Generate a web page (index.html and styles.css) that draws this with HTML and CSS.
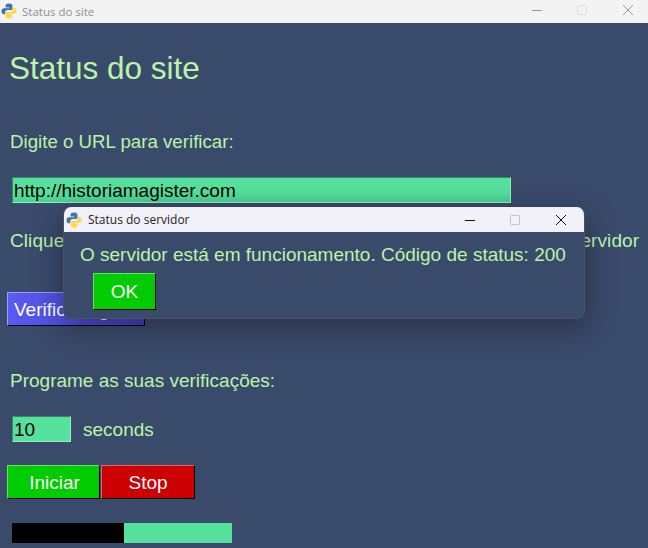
FILE: index.html
```html
<!DOCTYPE html>
<html lang="en">
<head>
<meta charset="UTF-8">
<title>Status do site</title>
<link rel="stylesheet" href="styles.css">
</head>
<body>
<svg class="defs" width="0" height="0">
  <symbol id="python" viewBox="0 0 16 16">
    <path fill="#3b77a8" d="M8 0.5C5.6 0.5 4.6 1.4 4.6 2.8V4.5H8.2V5.2H3C1.4 5.2 0.5 6.4 0.5 8.2C0.5 10 1.4 11.2 2.8 11.2H4.2V9.4C4.2 8 5.2 7.1 6.6 7.1H9.8C10.8 7.1 11.4 6.4 11.4 5.5V2.8C11.4 1.4 10.2 0.5 8 0.5Z"/>
    <path fill="#ffd84a" d="M8 15.5C10.4 15.5 11.4 14.6 11.4 13.2V11.5H7.8V10.8H13C14.6 10.8 15.5 9.6 15.5 7.8C15.5 6 14.6 4.8 13.2 4.8H11.8V6.6C11.8 8 10.8 8.9 9.4 8.9H6.2C5.2 8.9 4.6 9.6 4.6 10.5V13.2C4.6 14.6 5.8 15.5 8 15.5Z"/>
  </symbol>
</svg>

<div class="window">
  <div class="titlebar">
    <svg class="app-icon"><use href="#python"/></svg>
    <span class="title-text">Status do site</span>
    <div class="controls">
      <svg class="ctl" viewBox="0 0 10 10"><path d="M0 5.5H10" stroke="#999"/></svg>
      <svg class="ctl" viewBox="0 0 10 10"><rect x="0.5" y="0.5" width="9" height="9" rx="1" fill="none" stroke="#ddd"/></svg>
      <svg class="ctl" viewBox="0 0 10 10"><path d="M0 0L10 10M10 0L0 10" stroke="#999"/></svg>
    </div>
  </div>

  <div class="content">
    <h1>Status do site</h1>
    <p class="label label-url">Digite o URL para verificar:</p>
    <input class="field field-url" type="text" value="http://historiamagister.com">
    <p class="label label-check">Clique no botão abaixo para verificar agora o estado atual do seu servidor</p>
    <button class="btn btn-verify">Verificar agora</button>
    <p class="label label-schedule">Programe as suas verificações:</p>
    <div class="interval-row">
      <input class="field field-seconds" type="text" value="10">
      <span class="label">seconds</span>
    </div>
    <div class="button-row">
      <button class="btn btn-start">Iniciar</button>
      <button class="btn btn-stop">Stop</button>
    </div>
    <div class="progress"><div class="progress-done"></div></div>
  </div>
</div>

<div class="dialog">
  <div class="titlebar dialog-bar">
    <svg class="app-icon"><use href="#python"/></svg>
    <span class="title-text dialog-title">Status do servidor</span>
    <div class="controls">
      <svg class="ctl" viewBox="0 0 10 10"><path d="M0 5.5H10" stroke="#111"/></svg>
      <svg class="ctl" viewBox="0 0 10 10"><rect x="0.5" y="0.5" width="9" height="9" rx="1" fill="none" stroke="#c4c4c8"/></svg>
      <svg class="ctl" viewBox="0 0 10 10"><path d="M0 0L10 10M10 0L0 10" stroke="#111"/></svg>
    </div>
  </div>
  <div class="dialog-body">
    <p class="label dialog-msg">O servidor está em funcionamento. Código de status: 200</p>
    <button class="btn btn-ok">OK</button>
  </div>
</div>
</body>
</html>
```

FILE: styles.css
```css
* {
  box-sizing: border-box;
}
html, body {
  height: 100%;
}
body {
  margin: 0;
  overflow: hidden;
  background-color: #3a4a6b;
  font-family: "Liberation Sans", Arial, sans-serif;
}
.defs {
  position: absolute;
}
.titlebar {
  display: flex;
  align-items: center;
  height: 23px;
  background-color: #f3f3f3;
}
.app-icon {
  width: 16px;
  height: 16px;
  margin: 0 0 2px 1px;
}
.title-text {
  margin-left: 5px;
  font-family: "Open Sans", sans-serif;
  font-size: 11.5px;
  color: #8f8f8f;
}
.controls {
  display: flex;
  gap: 35px;
  margin: 0 15px 3px auto;
}
.ctl {
  width: 10px;
  height: 10px;
}
.ctl:last-child {
  margin-left: 1px;
}
.content {
  display: flex;
  flex-direction: column;
  align-items: flex-start;
  padding-left: 7px;
}
h1 {
  margin: 26px 0 0 2px;
  font-size: 31.5px;
  font-weight: normal;
  line-height: 38px;
  color: #b8f5a8;
}
.label {
  margin: 0;
  font-size: 19px;
  line-height: 24px;
  color: #b8f5a8;
}
.content > .label {
  margin-left: 3px;
  white-space: nowrap;
}
.label-url {
  margin-top: 43px;
  font-size: 18.7px;
}
.field {
  height: 26px;
  padding: 1px 0 0 1px;
  border: 1px solid;
  border-color: #2f8a70 #8ff0c0 #8ff0c0 #2f8a70;
  border-radius: 0;
  background: linear-gradient(#55e09c 60%, #4bd293);
  font-family: inherit;
  font-size: 19px;
  color: #000;
  outline: none;
}
.field-url {
  width: 499px;
  margin: 23px 0 0 5px;
}
.label-check {
  margin-top: 26px;
  letter-spacing: 0.08px;
}
.btn {
  padding: 1px 0 0;
  border: 1px solid;
  border-color: #9c9cf0 #000 #000 #9c9cf0;
  border-radius: 0;
  font-family: inherit;
  font-size: 19px;
  color: #fff;
}
.btn-verify {
  width: 138px;
  height: 34px;
  margin-top: 39px;
  background: linear-gradient(90deg, #5a5af5, #4040c0);
  text-align: left;
  padding-left: 6px;
}
.label-schedule {
  margin-top: 43px;
}
.interval-row {
  display: flex;
  align-items: center;
  gap: 12px;
  margin: 23px 0 0 5px;
}
.interval-row .label {
  padding-top: 2px;
}
.field-seconds {
  width: 59px;
  background: #55e09c;
}
.button-row {
  display: flex;
  gap: 1px;
  margin-top: 23px;
}
.btn-start, .btn-stop {
  width: 93px;
  height: 34px;
}
.btn-start {
  padding-left: 2px;
  background-color: #00cc00;
  border-color: #66e066 #000 #000 #66e066;
}
.btn-stop {
  width: 94px;
  background-color: #cc0000;
  border-color: #e06666 #000 #000 #e06666;
}
.progress {
  width: 220px;
  height: 20px;
  margin: 24px 0 0 5px;
  background-color: #55e09c;
}
.progress-done {
  width: 112px;
  height: 100%;
  background-color: #000;
}
.dialog {
  position: absolute;
  left: 63px;
  top: 207px;
  width: 522px;
  height: 112px;
  overflow: hidden;
  border: 1px solid #4c5460;
  border-top: 0;
  border-radius: 8px;
  background-color: #3a4a6b;
  box-shadow: 0 8px 30px rgba(0, 0, 0, 0.35);
}
.dialog-bar {
  height: 25px;
  background-color: #f2f1f8;
}
.dialog-bar .app-icon {
  margin: 0 0 0 2px;
}
.dialog-bar .controls {
  margin: 0 18px 0 auto;
}
.dialog-title {
  margin-left: 6px;
  font-size: 12px;
  color: #222;
}
.dialog-body {
  padding: 11px 0 0 16px;
}
.dialog-msg {
  white-space: nowrap;
}
.btn-ok {
  display: block;
  width: 63px;
  height: 37px;
  margin: 6px 0 0 13px;
  background-color: #00cc00;
  border-color: #66e066 #000 #000 #66e066;
}
```
